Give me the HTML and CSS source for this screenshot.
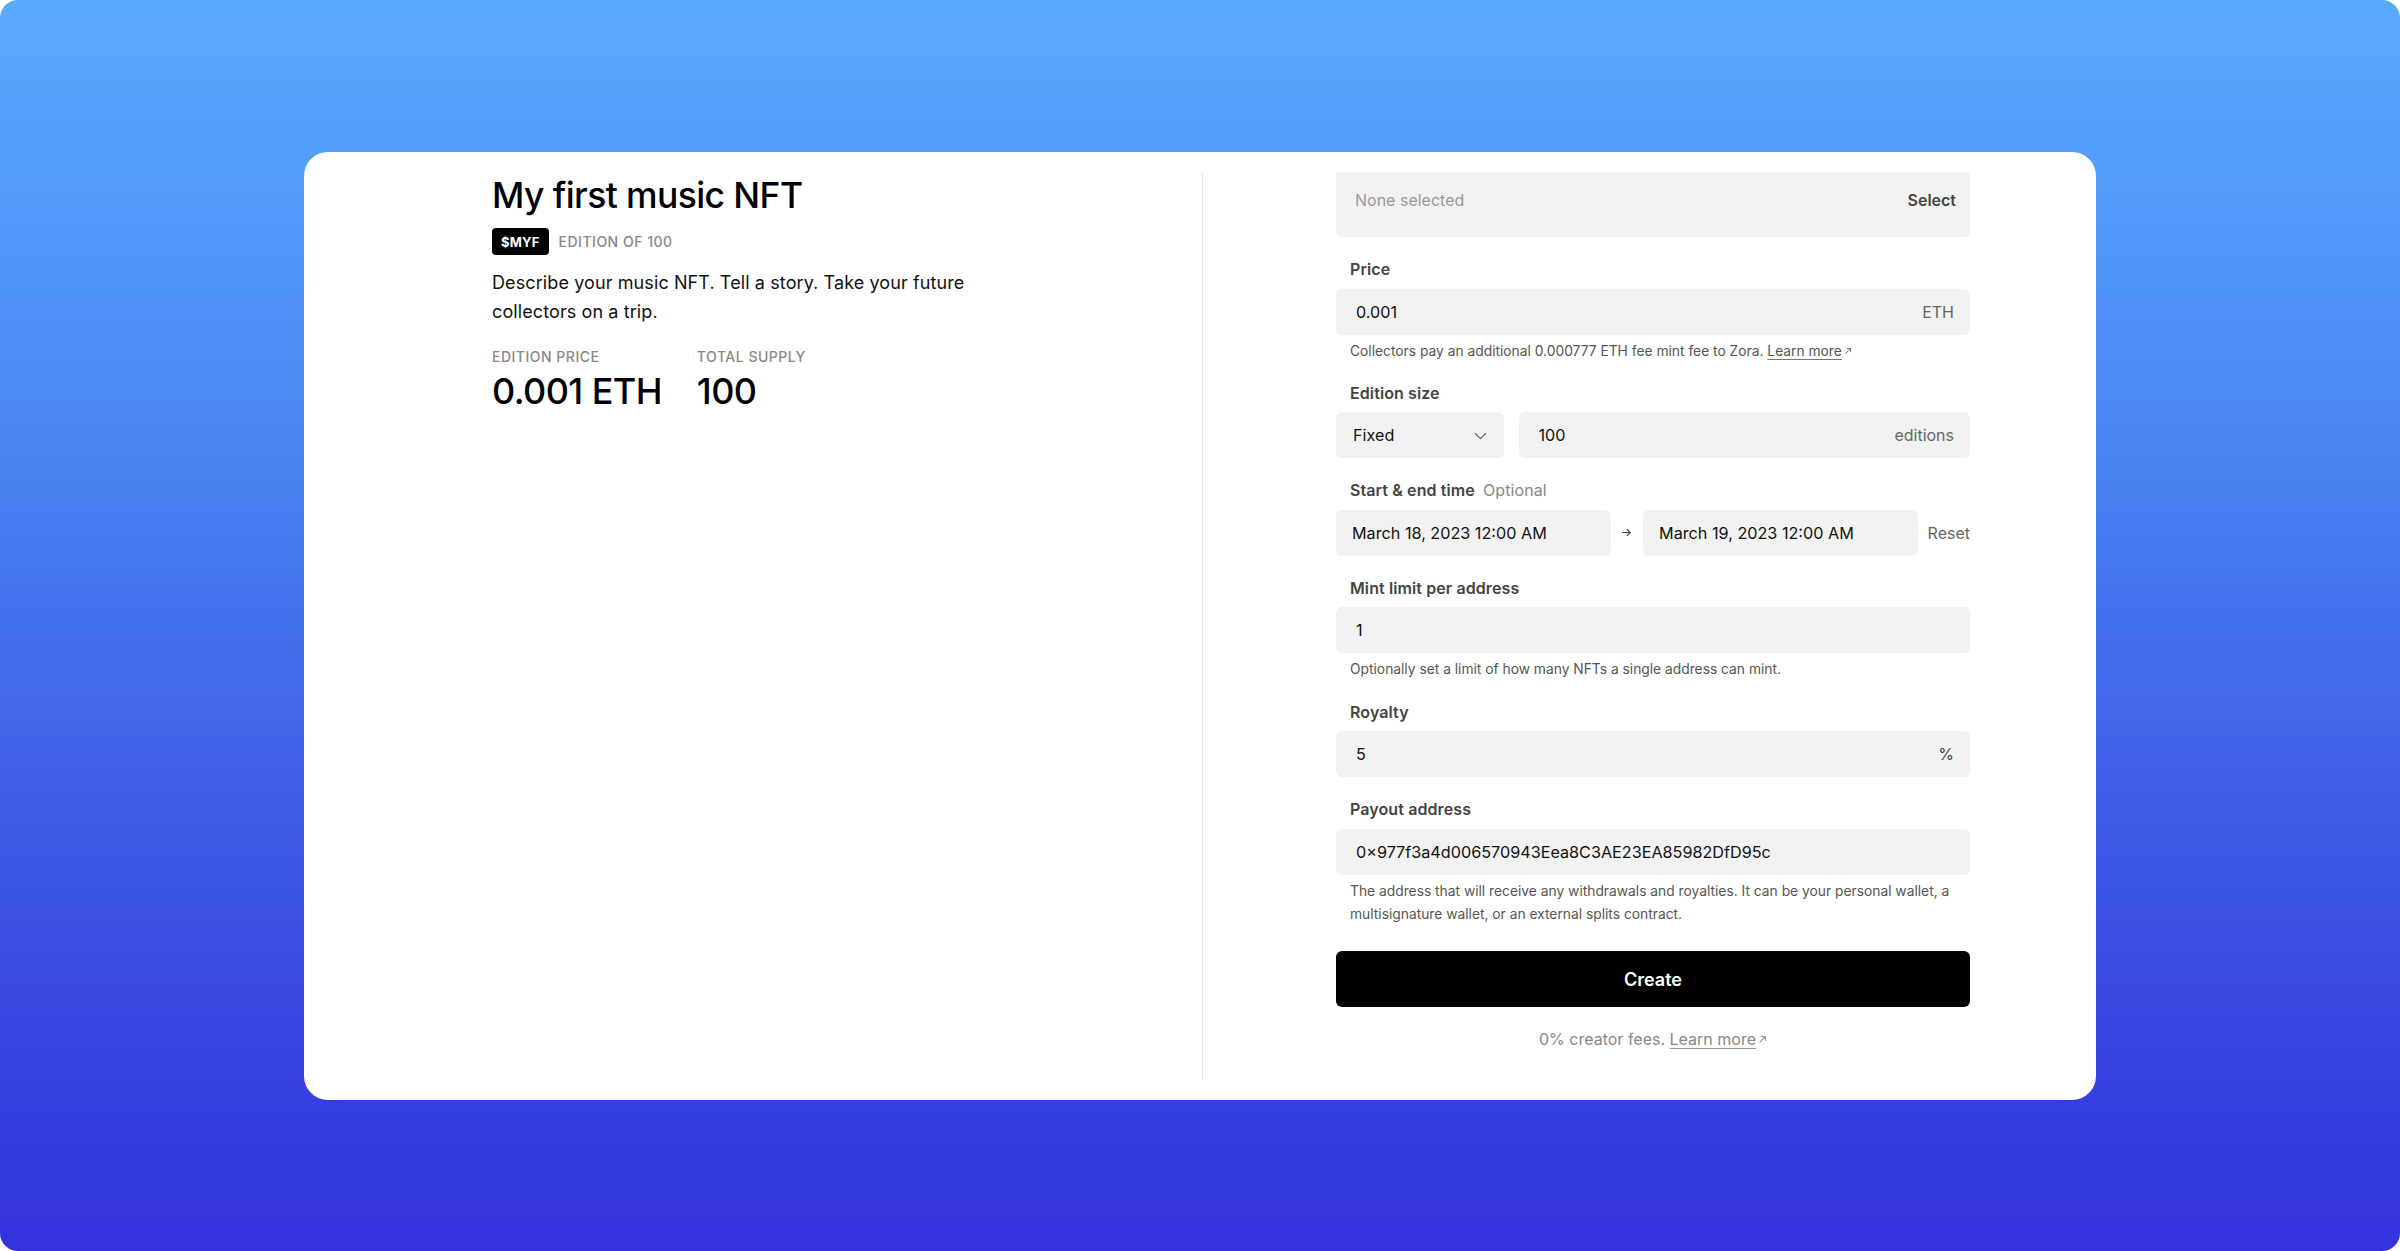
FILE: index.html
```html
<!DOCTYPE html>
<html lang="en">
<head>
<meta charset="utf-8">
<title>Create music NFT</title>
<link rel="stylesheet" href="styles.css">
</head>
<body>
<div class="page">
  <div class="card">
    <section class="preview">
      <h1 class="title">My first music NFT</h1>
      <div class="meta">
        <span class="badge">$MYF</span>
        <span class="edition">Edition of 100</span>
      </div>
      <p class="desc">Describe your music NFT. Tell a story. Take your future collectors on a trip.</p>
      <div class="stats">
        <div class="stat">
          <div class="stat-label">Edition price</div>
          <div class="stat-value">0.001 ETH</div>
        </div>
        <div class="stat">
          <div class="stat-label">Total supply</div>
          <div class="stat-value">100</div>
        </div>
      </div>
    </section>

    <section class="form-col">
      <div class="scroll">
        <div class="form">
          <div class="box select-box">
            <span class="placeholder">None selected</span>
            <span class="select-btn">Select</span>
          </div>

          <div class="field">
            <div class="label">Price</div>
            <div class="box input"><span class="value">0.001</span><span class="suffix">ETH</span></div>
            <p class="help">Collectors pay an additional 0.000777 ETH fee mint fee to Zora. <span class="link">Learn more</span><svg class="ext" viewBox="0 0 8 8" width="8" height="8"><path d="M1.5 6.5 L6.5 1.5 M2.8 1.5 H6.5 V5.2" fill="none" stroke="currentColor" stroke-width="0.9"/></svg></p>
          </div>

          <div class="field">
            <div class="label">Edition size</div>
            <div class="row">
              <div class="box dropdown">
                <span class="value">Fixed</span>
                <svg class="chev" viewBox="0 0 13 8" width="13" height="8"><path d="M1 1.2 L6.5 6.7 L12 1.2" fill="none" stroke="#666" stroke-width="1.3"/></svg>
              </div>
              <div class="box input grow"><span class="value">100</span><span class="suffix">editions</span></div>
            </div>
          </div>

          <div class="field">
            <div class="label">Start &amp; end time <span class="optional">Optional</span></div>
            <div class="row dates">
              <div class="box date"><span class="value">March 18, 2023 12:00 AM</span></div>
              <div class="arrow"><svg viewBox="0 0 12 12" width="11" height="11"><path d="M1.5 6 H10 M6.5 2.5 L10 6 L6.5 9.5" fill="none" stroke="#444" stroke-width="1.3"/></svg></div>
              <div class="box date"><span class="value">March 19, 2023 12:00 AM</span></div>
              <span class="reset">Reset</span>
            </div>
          </div>

          <div class="field">
            <div class="label">Mint limit per address</div>
            <div class="box input"><span class="value">1</span></div>
            <p class="help">Optionally set a limit of how many NFTs a single address can mint.</p>
          </div>

          <div class="field">
            <div class="label">Royalty</div>
            <div class="box input"><span class="value">5</span><span class="suffix dark">%</span></div>
          </div>

          <div class="field">
            <div class="label">Payout address</div>
            <div class="box input"><span class="value">0×977f3a4d006570943Eea8C3AE23EA85982DfD95c</span></div>
            <p class="help">The address that will receive any withdrawals and royalties. It can be your personal wallet, a multisignature wallet, or an external splits contract.</p>
          </div>

          <button class="create" type="button">Create</button>

          <p class="fees">0% creator fees. <span class="link">Learn more</span><svg class="ext big" viewBox="0 0 8 8" width="9" height="9"><path d="M1.5 6.5 L6.5 1.5 M2.8 1.5 H6.5 V5.2" fill="none" stroke="currentColor" stroke-width="0.9"/></svg></p>
        </div>
      </div>
    </section>
  </div>
</div>
</body>
</html>
```

FILE: styles.css
```css
* { box-sizing: border-box; }

html, body {
  margin: 0;
  padding: 0;
  background: #ffffff;
}

body {
  font-family: Inter, "Noto Sans", "Liberation Sans", sans-serif;
  color: #111;
}

.page {
  width: 100%;
  height: 100vh;
  border-radius: 18px;
  background: linear-gradient(180deg, #5aaafe 0%, #4a86f3 35%, #3d5be6 65%, #3331dc 100%);
  display: flex;
  align-items: center;
  justify-content: center;
}

.card {
  width: 1792px;
  height: 948px;
  background: #fff;
  border-radius: 24px;
  padding: 20px 0;
  display: flex;
}

/* Left preview column */
.preview {
  width: 898px;
  flex: none;
  padding: 2.5px 0 0 188px;
}

.title {
  margin: 0;
  font-size: 35.5px;
  line-height: 44px;
  font-weight: 500;
  color: #000;
  letter-spacing: -0.6px;
}

.meta {
  margin-top: 10px;
  display: flex;
  align-items: center;
  gap: 10px;
  height: 27px;
}

.badge {
  height: 27px;
  padding: 0 9px;
  border-radius: 4px;
  background: #000;
  color: #fff;
  font-size: 13px;
  font-weight: 700;
  display: flex;
  align-items: center;
  letter-spacing: 0.2px;
}

.edition {
  font-size: 14px;
  color: #888;
  text-transform: uppercase;
  letter-spacing: 0.5px;
  font-weight: 500;
}

.desc {
  margin: 14px 0 0;
  max-width: 520px;
  font-size: 18px;
  line-height: 28.8px;
  color: #111;
  letter-spacing: 0.1px;
}

.stats {
  margin-top: 20.5px;
  display: flex;
  gap: 35px;
}

.stat-label {
  font-size: 14px;
  line-height: 20px;
  color: #888;
  text-transform: uppercase;
  letter-spacing: 0.5px;
  font-weight: 500;
}

.stat-value {
  margin-top: 2px;
  font-size: 36px;
  line-height: 44px;
  font-weight: 500;
  color: #000;
  letter-spacing: -0.6px;
}

/* Right form column */
.form-col {
  flex: 1;
  border-left: 1px solid #e8e8e8;
  margin-top: 1.5px;
  padding: 0 126px 0 133px;
  display: flex;
}

.scroll {
  flex: 1;
  overflow: hidden;
  margin-top: -1.5px;
}

.form {
  margin-top: -9.5px;
}

.box {
  background: #f2f2f2;
  border-radius: 6px;
  display: flex;
  align-items: center;
  font-size: 16px;
  line-height: 20px;
}

.select-box {
  height: 75px;
  padding: 0 14px 0 19px;
  justify-content: space-between;
}

.placeholder { color: #999; }

.select-btn {
  font-size: 16px;
  font-weight: 600;
  color: #444;
}

.field { margin-top: 22px; }

.label {
  font-size: 16px;
  line-height: 20px;
  font-weight: 600;
  color: #444;
  padding-left: 14px;
  margin-bottom: 9.5px;
  letter-spacing: 0.1px;
}

.optional {
  font-weight: 400;
  color: #888;
  margin-left: 4px;
}

.input {
  height: 46px;
  padding: 0 16px 0 20px;
  justify-content: space-between;
}

.value { color: #111; font-size: 16.2px; }

.suffix { color: #666; }
.suffix.dark { color: #444; }

.help {
  margin: 5px 0 -1.6px;
  padding-left: 14px;
  font-size: 13.8px;
  line-height: 23px;
  color: #555;
}

.link {
  text-decoration: underline;
  text-underline-offset: 3px;
  text-decoration-color: #777;
}

.ext {
  margin-left: 2px;
  vertical-align: 1px;
  color: #666;
}

.row {
  display: flex;
  align-items: center;
  gap: 14.5px;
}

.dropdown {
  width: 168px;
  height: 46px;
  padding: 0 17px 0 17px;
  justify-content: space-between;
}

.chev { margin-top: 1px; }

.grow { flex: 1; }

.dates { gap: 0; }

.date {
  flex: 1;
  height: 46px;
  padding: 0 16px;
}

.arrow {
  width: 32.5px;
  display: flex;
  justify-content: center;
  align-items: center;
}

.reset {
  margin-left: 10px;
  font-size: 16px;
  color: #666;
}

.create {
  display: block;
  width: 100%;
  height: 56px;
  margin-top: 27px;
  border: none;
  border-radius: 6px;
  background: #000;
  color: #fff;
  font-family: inherit;
  font-size: 18px;
  font-weight: 600;
  cursor: pointer;
}

.fees {
  margin: 21.5px 0 0;
  text-align: center;
  font-size: 16px;
  line-height: 20px;
  color: #888;
}

.fees .link { text-decoration-color: #999; }
.fees .ext { color: #888; }
```
